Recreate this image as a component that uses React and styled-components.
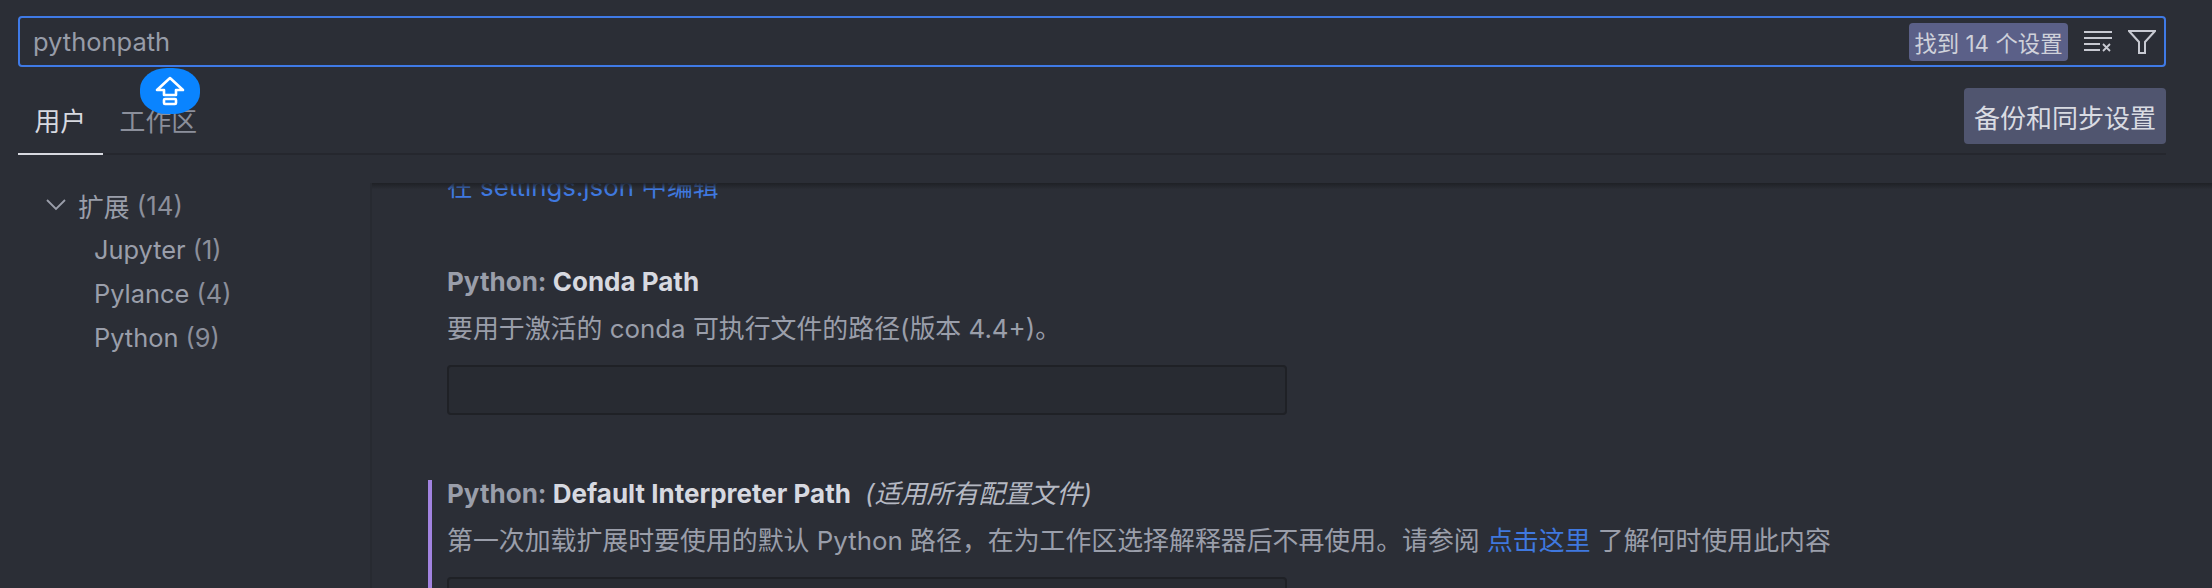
import React from "react";
import styled, { createGlobalStyle } from "styled-components";

const GlobalStyle = createGlobalStyle`
  html, body {
    margin: 0;
    background: #2b2e36;
  }
  body {
    font-family: Inter, "Noto Sans CJK SC", sans-serif;
    font-size: 25.8px;
    color: #9a9eaa;
  }
`;

const Page = styled.div`
  height: 588px;
  overflow: hidden;
  display: flex;
  flex-direction: column;
  position: relative;
  background: #2b2e36;
`;

const Header = styled.div`
  padding: 16px 46px 0 18px;
`;

const SearchBox = styled.div`
  box-sizing: border-box;
  height: 51px;
  display: flex;
  align-items: center;
  border: 2px solid #3f7ae6;
  border-radius: 4px;
  padding: 0 8px 0 13px;
`;

const SearchText = styled.span`
  flex: 1;
  font-size: 25.5px;
  color: #979ca8;
`;

const CountBadge = styled.span`
  box-sizing: border-box;
  height: 38px;
  width: 159px;
  display: flex;
  align-items: center;
  justify-content: center;
  margin-right: 16px;
  background: #5b6088;
  border-radius: 4px;
  color: #cfd1da;
  font-size: 22.4px;
  white-space: pre;
`;

const IconSlot = styled.svg`
  display: block;
  margin-left: ${(p) => p.$gap || 0}px;
`;

const TabRow = styled.div`
  display: flex;
  justify-content: space-between;
  align-items: flex-end;
  height: 86px;
  border-bottom: 2px solid #25272e;
`;

const Tabs = styled.div`
  display: flex;
`;

const Tab = styled.div`
  box-sizing: border-box;
  height: 50px;
  padding: 0 ${(p) => (p.$active ? 16.5 : 0)}px;
  margin-left: ${(p) => (p.$active ? 0 : 17)}px;
  margin-bottom: -2px;
  line-height: 34px;
  color: ${(p) => (p.$active ? "#d7d9e0" : "#8b8f9b")};
  border-bottom: 2px solid ${(p) => (p.$active ? "#d7d9e0" : "transparent")};
`;

const SyncButton = styled.div`
  box-sizing: border-box;
  width: 202px;
  height: 56px;
  margin-bottom: 9px;
  display: flex;
  align-items: center;
  justify-content: center;
  background: #50556f;
  border-radius: 4px;
  font-size: 26px;
  color: #d9dbe2;
`;

const Body = styled.div`
  flex: 1;
  display: flex;
  min-height: 0;
  padding-top: 28px;
`;

const Sidebar = styled.div`
  width: 370px;
  flex-shrink: 0;
`;

const TreeRow = styled.div`
  height: 44px;
  display: flex;
  align-items: center;
  padding-left: ${(p) => (p.$child ? 94 : 46)}px;
  font-size: ${(p) => (p.$child ? 25.4 : 25.8)}px;
`;

const Chevron = styled.svg`
  margin-right: 12px;
`;

const Count = styled.span`
  color: #8b8f9b;
  white-space: pre;
`;

const Panel = styled.div`
  flex: 1;
  position: relative;
  overflow: hidden;
  padding-left: 75px;
  border-left: 2px solid #272a31;
  &::before {
    content: "";
    position: absolute;
    left: 0;
    right: 0;
    top: 0;
    height: 6px;
    background: linear-gradient(rgba(30, 32, 37, 0.95), rgba(40, 43, 50, 0.25));
  }
`;

const EditLink = styled.a`
  display: block;
  margin-top: -12px;
  height: 32px;
  line-height: 32px;
  color: #3f78df;
`;

const Setting = styled.div`
  position: relative;
  margin-top: 63px;
`;

const ModifiedBar = styled.div`
  position: absolute;
  left: -19px;
  top: 2px;
  bottom: 0;
  width: 4px;
  background: #a283e0;
`;

const Title = styled.div`
  height: 32px;
  line-height: 32px;
  font-size: 26px;
  font-weight: 700;
  color: #9a9eaa;
  white-space: pre;
`;

const TitleName = styled.span`
  color: #d7d9e0;
`;

const Scope = styled.span`
  font-weight: 400;
  font-style: italic;
  color: #b5b8c2;
  margin-left: 14px;
`;

const Description = styled.div`
  height: 32px;
  line-height: 32px;
  margin-top: 15px;
  font-size: 25.9px;
  white-space: pre;
`;

const DescLink = styled.a`
  color: #3f78df;
`;

const TextField = styled.div`
  box-sizing: border-box;
  width: 840px;
  height: 50px;
  margin-top: 20px;
  background: #282b32;
  border: 2px solid #1f2126;
  border-radius: 4px;
`;

const FloatBadge = styled.div`
  position: absolute;
  left: 140px;
  top: 68px;
  width: 60px;
  height: 46px;
  display: flex;
  align-items: center;
  justify-content: center;
  background: #0a84ff;
  border-radius: 27px / 21px;
`;

export default function App() {
  return (
    <Page>
      <GlobalStyle />
      <Header>
        <SearchBox>
          <SearchText>pythonpath</SearchText>
          <CountBadge>找到 14 个设置</CountBadge>
          <IconSlot width="28" height="21" viewBox="0 0 28 21" fill="none" stroke="#c8cad2" strokeWidth="2">
            <path d="M0 1H28M0 7H28M0 13H16M0 19H16" />
            <path d="M19 13L26 20M26 13L19 20" strokeWidth="1.8" />
          </IconSlot>
          <IconSlot $gap={16} width="28" height="24" viewBox="0 0 28 24" fill="none" stroke="#c8cad2" strokeWidth="2">
            <path d="M1 1H27L17 12V23H11V12Z" />
          </IconSlot>
        </SearchBox>
        <TabRow>
          <Tabs>
            <Tab $active>用户</Tab>
            <Tab>工作区</Tab>
          </Tabs>
          <SyncButton>备份和同步设置</SyncButton>
        </TabRow>
      </Header>
      <Body>
        <Sidebar>
          <TreeRow>
            <Chevron width="20" height="12" viewBox="0 0 20 12" fill="none" stroke="#9a9eaa" strokeWidth="1.8">
              <path d="M1 1L10 10L19 1" />
            </Chevron>
            <span>扩展</span>
            <Count> (14)</Count>
          </TreeRow>
          <TreeRow $child>
            <span>Jupyter</span>
            <Count> (1)</Count>
          </TreeRow>
          <TreeRow $child>
            <span>Pylance</span>
            <Count> (4)</Count>
          </TreeRow>
          <TreeRow $child>
            <span>Python</span>
            <Count> (9)</Count>
          </TreeRow>
        </Sidebar>
        <Panel>
          <EditLink>在 settings.json 中编辑</EditLink>
          <Setting>
            <Title>
              Python: <TitleName>Conda Path</TitleName>
            </Title>
            <Description>要用于激活的 conda 可执行文件的路径(版本 4.4+)。</Description>
            <TextField />
          </Setting>
          <Setting>
            <ModifiedBar />
            <Title>
              Python: <TitleName>Default Interpreter Path</TitleName>
              <Scope>(适用所有配置文件)</Scope>
            </Title>
            <Description>
              第一次加载扩展时要使用的默认 Python 路径，在为工作区选择解释器后不再使用。请参阅 <DescLink>点击这里</DescLink> 了解何时使用此内容
            </Description>
            <TextField />
          </Setting>
        </Panel>
      </Body>
      <FloatBadge>
        <svg width="30" height="30" viewBox="0 0 30 30" fill="none" stroke="#fff" strokeWidth="2.6" strokeLinejoin="round">
          <path d="M15 2L28 14H21V19H9V14H2Z" />
          <rect x="9" y="23" width="12" height="5" rx="1" />
        </svg>
      </FloatBadge>
    </Page>
  );
}
